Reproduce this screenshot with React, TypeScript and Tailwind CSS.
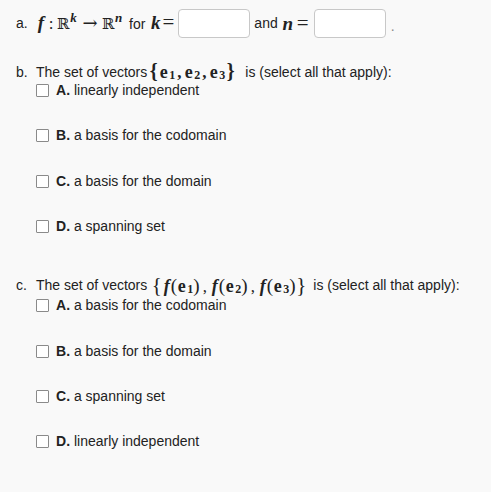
import React from "react";

const SERIF = "font-['Liberation_Serif',serif]";

function G({ c, w, children }: { c: string; w: string; children: React.ReactNode }) {
  return <span className={`inline-flex justify-center shrink-0 leading-none ${w} ${c}`}>{children}</span>;
}

function Box() {
  return <span className="inline-block w-[13px] h-[13px] border border-[#8a8a8a] bg-white rounded-[1px] shrink-0" />;
}

function Option({ letter, text, cls }: { letter: string; text: string; cls: string }) {
  return (
    <div className={`flex items-center h-[16px] ${cls}`}>
      <Box />
      <span className="ml-[7px] text-[14px] text-[#222] leading-[16px]">
        <b>{letter}.</b> {text}
      </span>
    </div>
  );
}

function Ev({ n }: { n: number }) {
  return (
    <span className="inline-flex items-baseline leading-none">
      <G w="w-[11px]" c={`${SERIF} font-bold text-[18px]`}>e</G>
      <G w="w-[6px]" c={`${SERIF} font-bold text-[12px] relative top-[1px]`}>{n}</G>
    </span>
  );
}

function Fe({ n }: { n: number }) {
  return (
    <span className="inline-flex items-baseline leading-none">
      <G w="w-[9px]" c={`${SERIF} italic font-bold text-[18px]`}>f</G>
      <G w="w-[5px]" c={`${SERIF} text-[19px]`}>(</G>
      <Ev n={n} />
      <G w="w-[6px]" c={`${SERIF} text-[19px]`}>)</G>
    </span>
  );
}

export default function App() {
  return (
    <div className="w-[491px] h-[492px] bg-[#f9f9f9] text-[#222] text-[14px] font-['Liberation_Sans',Arial,sans-serif]">
      {/* a */}
      <div className="flex items-center pt-[9px] pl-[16px] h-[38px]">
        <span className="w-[19px]">a.</span>
        <span className="inline-flex items-baseline">
          <G w="w-[12px]" c={`${SERIF} italic font-bold text-[19px]`}>f</G>
          <G w="w-[8px]" c={`${SERIF} text-[17px]`}>:</G>
          <G w="w-[12px]" c="font-['DejaVu_Serif',serif] text-[15px] ml-[2px]">ℝ</G>
          <G w="w-[9px]" c={`${SERIF} italic font-bold text-[13px] relative -top-[7px]`}>k</G>
          <G w="w-[24px]" c="font-['DejaVu_Serif',serif] text-[18px]">→</G>
          <G w="w-[12px]" c="font-['DejaVu_Serif',serif] text-[15px]">ℝ</G>
          <G w="w-[9px]" c={`${SERIF} italic font-bold text-[13px] relative -top-[7px]`}>n</G>
          <span className="ml-[6px]">for</span>
          <G w="w-[11px]" c={`${SERIF} italic font-bold text-[19px] ml-[5px]`}>k</G>
          <G w="w-[14px]" c={`${SERIF} text-[21px]`}>=</G>
        </span>
        <span className="ml-[3px] w-[72px] h-[29px] bg-white border border-[#c8c8c8] rounded-[4px]" />
        <span className="ml-[4px]">and</span>
        <G w="w-[12px]" c={`${SERIF} italic font-bold text-[19px] ml-[4px]`}>n</G>
        <G w="w-[14px]" c={`${SERIF} text-[21px] ml-[2px]`}>=</G>
        <span className="ml-[4px] w-[72px] h-[29px] bg-white border border-[#c8c8c8] rounded-[4px]" />
        <span className="ml-[5px] self-end mb-[1px] text-[#888]">.</span>
      </div>

      {/* b */}
      <div className="flex items-center h-[18px] mt-[25px] pl-[16px]">
        <span className="w-[20px]">b.</span>
        <span>The set of vectors</span>
        <span className="inline-flex items-baseline ml-[2px] leading-none relative -top-[1px]">
          <G w="w-[9px]" c={`${SERIF} font-bold text-[20px]`}>{"{"}</G>
          <Ev n={1} />
          <G w="w-[8px]" c={`${SERIF} font-bold text-[17px]`}>,</G>
          <Ev n={2} />
          <G w="w-[8px]" c={`${SERIF} font-bold text-[17px]`}>,</G>
          <Ev n={3} />
          <G w="w-[11px]" c={`${SERIF} font-bold text-[20px]`}>{"}"}</G>
        </span>
        <span className="ml-[9px]">is (select all that apply):</span>
      </div>
      <div className="pl-[36px]">
        <Option letter="A" text="linearly independent" cls="mt-[1px]" />
        <Option letter="B" text="a basis for the codomain" cls="mt-[29px]" />
        <Option letter="C" text="a basis for the domain" cls="mt-[30px]" />
        <Option letter="D" text="a spanning set" cls="mt-[29px]" />
      </div>

      {/* c */}
      <div className="flex items-center h-[18px] mt-[42px] pl-[16px]">
        <span className="w-[20px]">c.</span>
        <span>The set of vectors</span>
        <span className="inline-flex items-baseline ml-[4px] leading-none">
          <G w="w-[11px]" c={`${SERIF} text-[21px]`}>{"{"}</G>
          <Fe n={1} />
          <G w="w-[11px]" c={`${SERIF} text-[17px]`}>,</G>
          <Fe n={2} />
          <G w="w-[11px]" c={`${SERIF} text-[17px]`}>,</G>
          <Fe n={3} />
          <G w="w-[12px]" c={`${SERIF} text-[21px]`}>{"}"}</G>
        </span>
        <span className="ml-[6px]">is (select all that apply):</span>
      </div>
      <div className="pl-[36px]">
        <Option letter="A" text="a basis for the codomain" cls="mt-[3px]" />
        <Option letter="B" text="a basis for the domain" cls="mt-[30px]" />
        <Option letter="C" text="a spanning set" cls="mt-[29px]" />
        <Option letter="D" text="linearly independent" cls="mt-[29px]" />
      </div>
    </div>
  );
}
